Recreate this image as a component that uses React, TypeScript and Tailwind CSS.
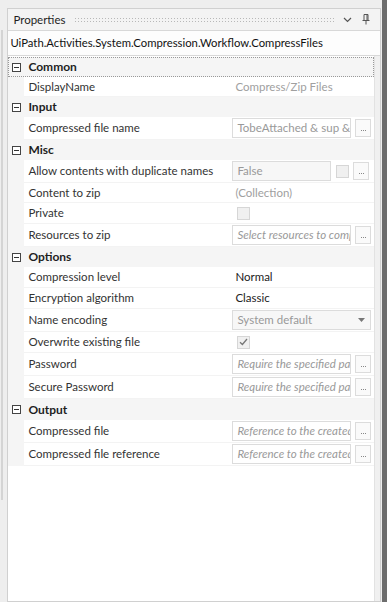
import React from 'react'

const font = { fontFamily: 'Lato, "Noto Sans", sans-serif' }

function Expander() {
  return (
    <div className="w-[9px] h-[9px] border border-[#444] flex items-center justify-center bg-white">
      <div className="w-[5px] h-px bg-[#333]" />
    </div>
  )
}

function Category({ label, h, focused }: { label: string; h: string; focused?: boolean }) {
  return (
    <div className={`${h} flex items-center bg-[#f5f5f5] ${focused ? 'outline outline-1 outline-dotted outline-[#999] -outline-offset-1' : ''}`}>
      <div className="w-[16px] flex justify-center pl-px">
        <Expander />
      </div>
      <span className="ml-[4px] text-[12px] font-bold text-[#1e1e1e]">{label}</span>
    </div>
  )
}

function Row({ label, h, children }: { label: string; h: string; children?: React.ReactNode }) {
  return (
    <div className={`${h} flex bg-[#f5f5f5]`}>
      <div className="w-[16px]" />
      <div className="flex-1 flex items-center bg-white border-b border-[#f3f3f3]">
        <div className="w-[208px] pl-[4px] text-[11.5px] text-[#333] whitespace-nowrap">{label}</div>
        <div className="flex-1 flex items-center h-full pr-[3px]">{children}</div>
      </div>
    </div>
  )
}

function Dots() {
  return (
    <div className="w-[16px] h-[18px] ml-[4px] border border-[#dcdcdc] bg-[#fafafa] flex items-end justify-center gap-px pb-[5px]">
      <div className="w-px h-px bg-[#888]" />
      <div className="w-px h-px bg-[#888]" />
      <div className="w-px h-px bg-[#888]" />
    </div>
  )
}

function Field({ text, italic }: { text: string; italic?: boolean }) {
  return (
    <div className="flex items-center w-full">
      <div
        className={`w-[119px] h-[20px] border border-[#dcdcdc] bg-white px-[4px] flex items-center text-[11.5px] text-[#999] whitespace-nowrap overflow-hidden ${italic ? 'italic' : ''}`}
      >
        {text}
      </div>
      <Dots />
    </div>
  )
}

function Check({ checked }: { checked?: boolean }) {
  return (
    <div className="ml-[5px] w-[13px] h-[13px] border border-[#d6d6d6] bg-[#f0f0f0] flex items-center justify-center">
      {checked && (
        <svg width="9" height="8" viewBox="0 0 9 8">
          <path d="M1 4.2 L3.4 6.5 L8 1" fill="none" stroke="#777" strokeWidth="1.3" />
        </svg>
      )}
    </div>
  )
}

export default function App() {
  return (
    <div className="w-[387px] h-[602px] flex bg-[#eeeeee] overflow-hidden" style={font}>
      <div className="w-[8px] flex pt-[30px]">
        <div className="w-[2px] h-[470px] ml-px bg-[#d4d4d4]" />
      </div>
      <div className="w-[374px] mt-[8px] flex flex-col border border-[#d0d0d0] bg-white">
        <div className="h-[21px] flex items-center bg-[#f3f3f3] pl-[5px] pr-[10px]">
          <span className="text-[11.5px] text-[#1e1e1e]">Properties</span>
          <div className="flex-1 h-[6px] mx-[8px] bg-[radial-gradient(circle,#b8b8b8_0.7px,transparent_0.9px)] bg-[length:3px_3px]" />
          <svg width="9" height="6" viewBox="0 0 9 6" className="mr-[10px]">
            <path d="M1 1 L4.5 4.5 L8 1" fill="none" stroke="#555" strokeWidth="1.2" />
          </svg>
          <svg width="8" height="11" viewBox="0 0 8 11">
            <path d="M2 0.5 H6 V6.5 H2 Z M5 0.5 V6.5 M0.5 6.5 H7.5 M4 6.5 V10.5" fill="none" stroke="#555" strokeWidth="1" />
          </svg>
        </div>
        <div className="h-[26px] flex items-center border-y border-[#d8d8d8] pl-[2px] text-[11.3px] text-[#111] bg-[#fdfdfd]">
          UiPath.Activities.System.Compression.Workflow.CompressFiles
        </div>
        <div className="flex flex-1">
          <div className="flex-1 flex flex-col pt-[1px]">
            <Category label="Common" h="h-[20px]" focused />
            <Row label="DisplayName" h="h-[20px]">
              <span className="pl-[3px] text-[11.5px] text-[#a0a0a0]">Compress/Zip Files</span>
            </Row>
            <Category label="Input" h="h-[20px]" />
            <Row label="Compressed file name" h="h-[23px]">
              <Field text="TobeAttached & sup & all" />
            </Row>
            <Category label="Misc" h="h-[20px]" />
            <Row label="Allow contents with duplicate names" h="h-[23px]">
              <div className="flex items-center w-full">
                <div className="w-[99px] h-[20px] border border-[#dcdcdc] bg-[#f7f7f7] px-[4px] flex items-center text-[11.5px] text-[#999]">
                  False
                </div>
                <div className="ml-[5px] w-[13px] h-[13px] border border-[#d6d6d6] bg-[#f0f0f0]" />
                <Dots />
              </div>
            </Row>
            <Row label="Content to zip" h="h-[20px]">
              <span className="pl-[3px] text-[11.5px] text-[#a0a0a0]">(Collection)</span>
            </Row>
            <Row label="Private" h="h-[21px]">
              <Check />
            </Row>
            <Row label="Resources to zip" h="h-[23px]">
              <Field text="Select resources to compress" italic />
            </Row>
            <Category label="Options" h="h-[20px]" />
            <Row label="Compression level" h="h-[21px]">
              <span className="pl-[3px] text-[11.5px] text-[#222]">Normal</span>
            </Row>
            <Row label="Encryption algorithm" h="h-[21px]">
              <span className="pl-[3px] text-[11.5px] text-[#222]">Classic</span>
            </Row>
            <Row label="Name encoding" h="h-[23px]">
              <div className="w-[139px] h-[20px] border border-[#dcdcdc] bg-[#f7f7f7] pl-[4px] pr-[5px] flex items-center justify-between text-[11.5px] text-[#999]">
                <span>System default</span>
                <svg width="7" height="4" viewBox="0 0 7 4">
                  <path d="M0 0 H7 L3.5 4 Z" fill="#777" />
                </svg>
              </div>
            </Row>
            <Row label="Overwrite existing file" h="h-[21px]">
              <Check checked />
            </Row>
            <Row label="Password" h="h-[23px]">
              <Field text="Require the specified password" italic />
            </Row>
            <Row label="Secure Password" h="h-[23px]">
              <Field text="Require the specified password" italic />
            </Row>
            <Category label="Output" h="h-[21px]" />
            <Row label="Compressed file" h="h-[23px]">
              <Field text="Reference to the created file" italic />
            </Row>
            <Row label="Compressed file reference" h="h-[23px]">
              <Field text="Reference to the created file" italic />
            </Row>
          </div>
          <div className="w-[6px] bg-[#f0f0f0] border-l border-[#e2e2e2]" />
        </div>
      </div>
      <div className="w-[5px] ml-px bg-[#6d6d6d]" />
    </div>
  )
}
